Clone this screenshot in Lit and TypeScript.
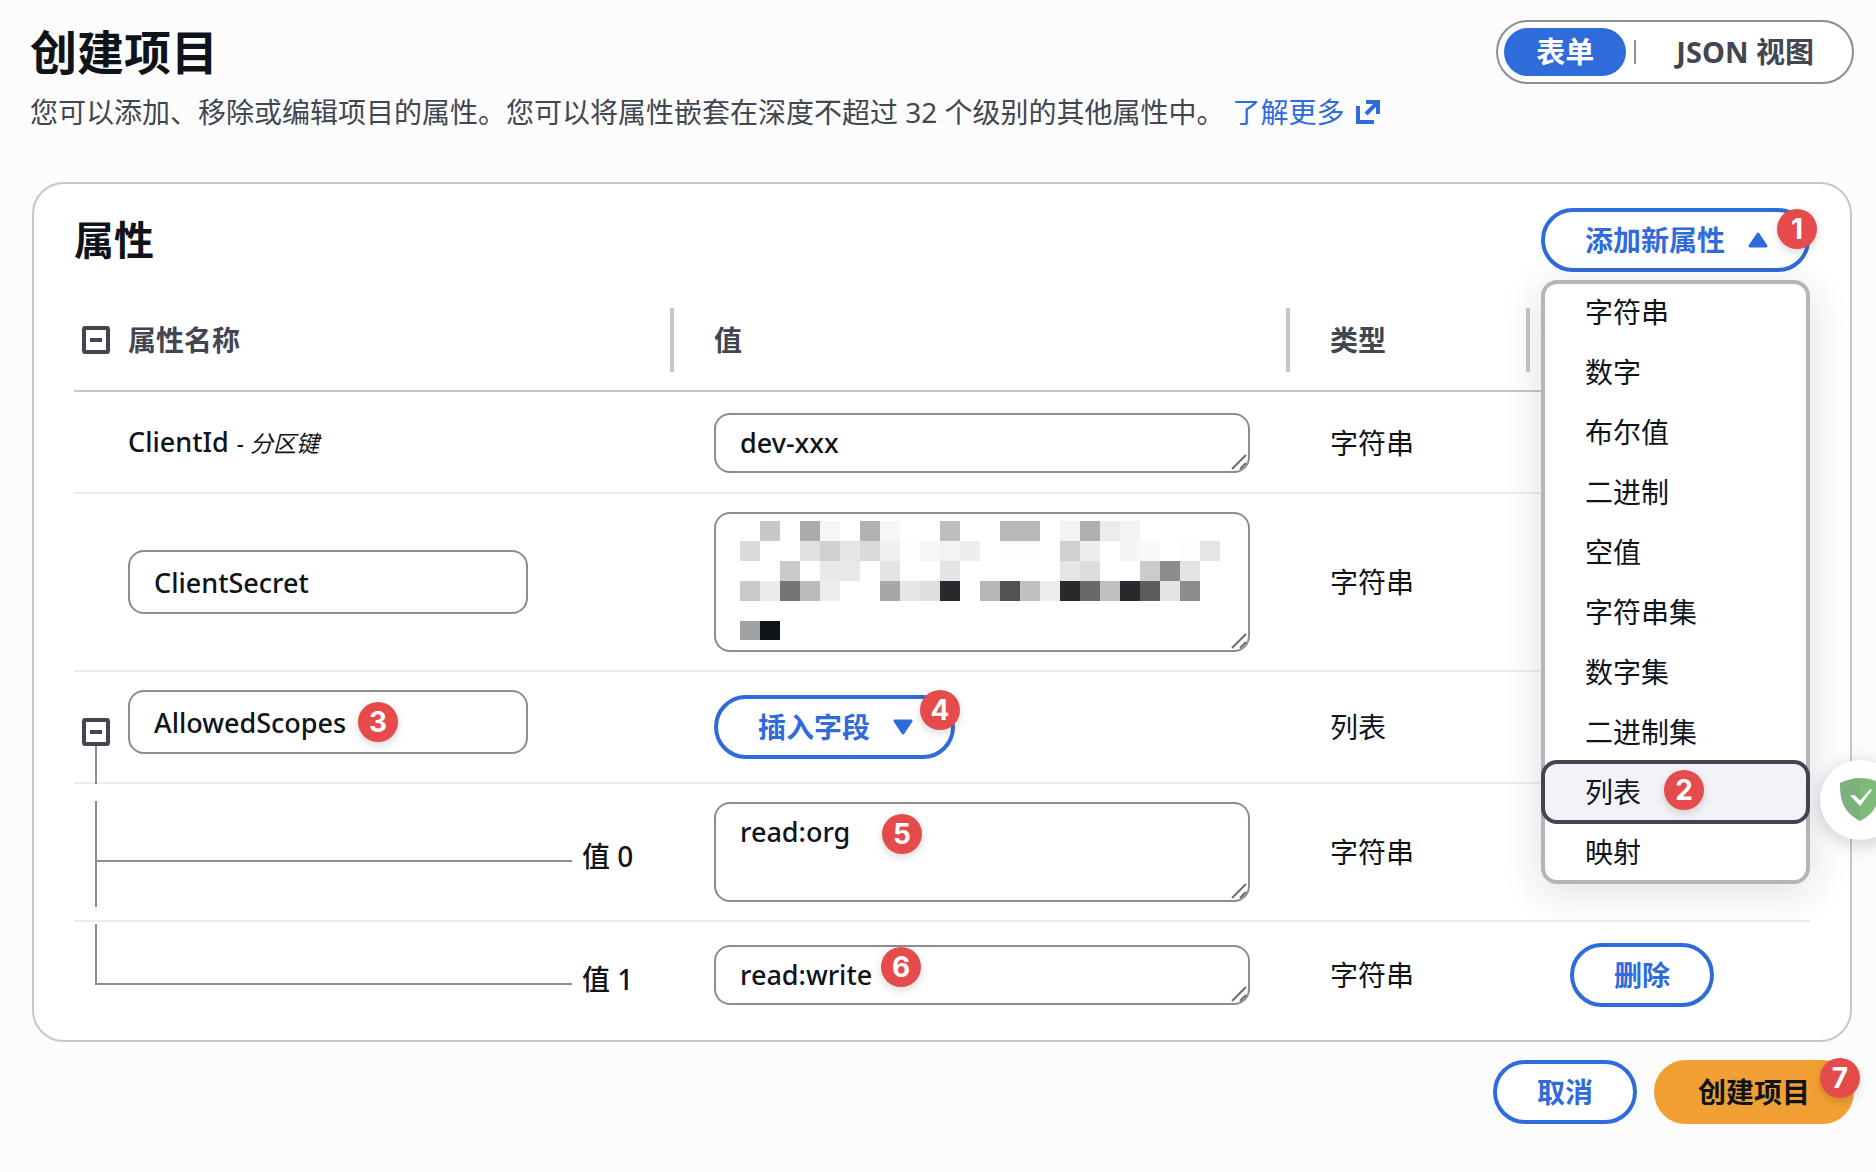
import { LitElement, html, svg, css, nothing } from "lit";
import { customElement } from "lit/decorators.js";

const TYPES = ["字符串", "数字", "布尔值", "二进制", "空值", "字符串集", "数字集", "二进制集", "列表", "映射"];

/* Mosaic over the secret value: [column, shade] pairs for each 20px line. */
const MOSAIC: Array<Array<[number, string]>> = [
  [[1, "#c6c7c9"], [3, "#ababac"], [4, "#f6f6f6"], [6, "#b1b2b4"], [7, "#f6f6f6"], [10, "#bdbec0"], [13, "#b7b8ba"], [14, "#b8b8b8"], [16, "#f4f4f4"], [17, "#b0b0b0"], [18, "#ececec"], [19, "#f4f4f4"]],
  [[0, "#d9dadc"], [3, "#e0e0e2"], [4, "#d0d0d0"], [5, "#e5e5e5"], [6, "#d9dbda"], [7, "#f0f0f0"], [8, "#fdfdfd"], [9, "#f7f7f7"], [10, "#f3f3f3"], [11, "#eeeeee"], [13, "#fdfdfd"], [14, "#fdfdfd"], [16, "#d0d0d0"], [17, "#ededed"], [19, "#f5f5f5"], [20, "#fafafa"], [22, "#fdfdfd"], [23, "#e5e5e5"]],
  [[2, "#cacaca"], [4, "#e9e9e9"], [5, "#e9e9e9"], [7, "#e3e3e3"], [10, "#e4e4e4"], [16, "#e5e7e6"], [17, "#dcdedd"], [20, "#cbcbcb"], [21, "#8b8c8e"], [22, "#e1e4e3"]],
  [[0, "#c9c9c9"], [1, "#ebebeb"], [2, "#747577"], [3, "#bbbcbe"], [4, "#ececec"], [7, "#a6a7a9"], [8, "#e7e7e7"], [9, "#dedede"], [10, "#28292d"], [12, "#b7b7b7"], [13, "#525355"], [14, "#c0c1c3"], [15, "#ececec"], [16, "#28292d"], [17, "#68696b"], [18, "#bfc1c0"], [19, "#28292d"], [20, "#5c5d5f"], [21, "#e4e4e4"], [22, "#8b8c8e"]],
  [],
  [[0, "#a0a1a3"], [1, "#0f141a"]],
];

@customElement("app-root")
export class AppRoot extends LitElement {
  static styles = css`
    :host {
      display: block;
      position: relative;
      min-height: 100vh;
      overflow: hidden;
      box-sizing: border-box;
      padding: 20px 22px 48px 30px;
      background: #fcfcfc;
      color: #0f141a;
      font-family: "Noto Sans", "Noto Sans CJK SC", sans-serif;
      font-size: 28px;
      line-height: 40px;
    }
    *, *::before, *::after { box-sizing: border-box; }
    h1, h2, p, ul { margin: 0; padding: 0; }
    button, input, textarea { font: inherit; color: inherit; margin: 0; }
    svg { display: block; flex: none; }

    .page-head { display: flex; justify-content: space-between; align-items: flex-start; }
    .title { font-size: 47px; line-height: 64px; font-weight: 700; }
    .intro { display: flex; align-items: center; margin-top: 8px; color: #424650; }
    .more { display: flex; align-items: center; gap: 11px; margin-left: 8px; color: #2f6bda; text-decoration: none; }

    .toggle { display: flex; align-items: center; gap: 8px; height: 64px; padding: 6px; border: 2px solid #8c8c94; border-radius: 32px; background: #fff; }
    .seg { height: 48px; padding: 0 32px; border: 0; border-radius: 24px; background: none; color: #424650; font-size: 29px; font-weight: 700; white-space: nowrap; line-height: 40px; }
    .seg.on { background: #2f6bda; color: #fff; }
    .toggle-rule { width: 2px; height: 24px; background: #8c8c94; }

    .card { margin: 50px 2px 0; padding: 24px 40px 12px; border: 2px solid #c6c6cd; border-radius: 32px; background: #fff; }
    .card-head { display: flex; justify-content: space-between; align-items: center; margin-bottom: 18px; }
    .card-title { font-size: 40px; line-height: 56px; font-weight: 700; }

    .btn { display: flex; align-items: center; justify-content: center; height: 64px; padding: 0 40px; border: 4px solid #2f6bda; border-radius: 32px; background: #fff; color: #2f6bda; font-weight: 700; white-space: nowrap; }
    .btn.drop { gap: 23px; padding-right: 38px; }
    .btn.primary { border-color: #f09f33; background: #f09f33; color: #0f141a; }

    .anchor { position: relative; }
    .badge { position: absolute; z-index: 3; display: flex; align-items: center; justify-content: center; width: 40px; height: 40px; border-radius: 50%; background: #e54b4b; color: #fff; font-family: Inter, sans-serif; font-weight: 700; font-size: 28px; line-height: 40px; box-shadow: 0 3px 8px rgba(0, 0, 0, 0.16); }
    .b1 { right: -7px; top: 1px; }
    .b2 { left: 123px; top: 10px; }
    .b3 { left: 230px; top: 12px; }
    .b4 { right: -5px; top: -5px; }
    .b5 { left: 168px; top: 12px; }
    .b6 { left: 167px; top: 2px; }
    .b7 { right: -6px; top: -2px; }

    .menu { position: absolute; z-index: 2; top: 72px; left: 0; right: 0; list-style: none; border: 4px solid #b4b4bb; border-radius: 16px; background: #fff; box-shadow: 0 8px 40px 2px rgba(0, 7, 22, 0.12); }
    .menu-item { position: relative; margin: 0 -4px -4px; }
    .menu-item:first-child { margin-top: -4px; }
    .option { display: block; width: 100%; height: 64px; padding: 0 40px; border: 4px solid transparent; border-radius: 16px; background: none; text-align: left; line-height: 40px; }
    .option.on { border-color: #424650; background: #f3f3f7; }

    .grid { display: block; }
    .row { display: grid; grid-template-columns: 600fr 616fr 240fr 280fr; border-bottom: 2px solid #ebebf0; }
    .row:last-child { border-bottom: 0; }
    .row.head { border-bottom: 2px solid #c6c6cd; color: #424650; }
    th, td { display: flex; align-items: center; padding: 18px 40px; font-weight: 400; text-align: left; }
    th { position: relative; font-weight: 700; }
    .rule { position: absolute; top: 18px; right: 0; width: 4px; height: 64px; background: #c6c6cd; }
    .head th { height: 100px; }
    .key td { padding-block: 21px 19px; }
    .list td { padding-block: 23px; }
    .last td { padding-block: 21px; }

    th.name, td.name { padding: 0; align-items: stretch; }
    .rail { display: flex; flex-direction: column; align-items: center; flex: none; width: 44px; margin-right: 10px; }
    .toggle-all { padding: 0; border: 0; background: none; }
    .name-body { display: flex; align-items: center; flex: 1; }
    .head .rail { justify-content: center; }
    .list .rail { padding-top: 46px; margin-bottom: -2px; }
    .list .name-body { padding-bottom: 10px; }
    .rail-line { flex: 1; width: 2px; background: #8c8c94; }
    .branch { display: flex; align-items: center; flex: 1; padding-left: 21px; }
    .stem { flex: none; width: 2px; background: #8c8c94; }
    .stem.mid { height: 106px; }
    .mid-branch { padding-top: 4px; }
    .end-branch { align-items: flex-start; padding-top: 2px; }
    .stem.end { height: 61px; }
    .arm { flex: 1; height: 2px; background: #8c8c94; }
    .mid-branch .arm { margin-top: 14px; }
    .end-branch .arm { margin-top: 59px; }
    .leaf { flex: none; width: 92px; margin-left: 10px; white-space: pre; font-weight: 500; }
    .mid-branch .leaf { margin-top: 4px; }
    .end-branch .leaf { margin-top: 35px; }

    .latin { font-size: 27px; font-weight: 500; }
    .key-note { margin-left: 8px; font-size: 23px; }
    .box { position: relative; width: 400px; height: 64px; }
    .input { width: 100%; height: 100%; padding: 0 24px; border: 2px solid #8c8c94; border-radius: 16px; background: #fff; font-size: 27px; font-weight: 500; outline: 0; }
    .area-wrap { position: relative; flex: 1; }
    .area { display: block; width: 100%; padding: 8px 24px; border: 2px solid #8c8c94; border-radius: 16px; background: #fff; font-size: 27px; font-weight: 500; line-height: 40px; resize: none; overflow: hidden; outline: 0; }
    .h60 { height: 60px; }
    .h100 { height: 100px; }
    .h140 { height: 140px; }
    .grip { position: absolute; right: 2px; bottom: 2px; }
    .mosaic { position: absolute; left: 26px; top: 9px; }

    .footer { display: flex; justify-content: flex-end; gap: 17px; margin-top: 18px; }
    .shield { position: absolute; z-index: 4; top: 760px; right: -24px; display: flex; align-items: center; justify-content: center; width: 80px; height: 80px; padding: 0; border: 0; border-radius: 50%; background: #fff; box-shadow: 0 4px 20px rgba(0, 0, 0, 0.2); }
  `;

  private minus() {
    return html`<button class="toggle-all" aria-label="折叠">
      <svg width="28" height="28" viewBox="0 0 28 28">
        <rect x="2" y="2" width="24" height="24" rx="1" fill="#fff" stroke="#424650" stroke-width="4" />
        <path d="M8 14h12" stroke="#424650" stroke-width="4" />
      </svg>
    </button>`;
  }

  private caret(up: boolean) {
    return html`<svg width="20" height="16" viewBox="0 0 20 16">
      <path d=${up ? "M10 2 18 14H2Z" : "M10 14 18 2H2Z"} fill="#2f6bda" stroke="#2f6bda" stroke-width="3" stroke-linejoin="round" />
    </svg>`;
  }

  private area(label: string, value: string, size: string, extra: unknown = nothing) {
    return html`<div class="area-wrap">
      <textarea class="area ${size}" aria-label=${label} spellcheck="false" .value=${value}></textarea>
      ${extra}
      <svg class="grip" width="17" height="17" viewBox="0 0 17 17" fill="none" stroke="#6e6e72" stroke-width="2">
        <path d="M1 15 15 1M9 15 15 9" />
      </svg>
    </div>`;
  }

  private mosaic() {
    return html`<svg class="mosaic" width="480" height="119" viewBox="0 0 480 119" shape-rendering="crispEdges">
      ${MOSAIC.map((line, y) =>
        line.map(([x, shade]) => svg`<rect x=${x * 20} y=${y * 20} width="20" height="20" fill=${shade} />`)
      )}
    </svg>`;
  }

  render() {
    return html`
      <header class="page-head">
        <div>
          <h1 class="title">创建项目</h1>
          <p class="intro">
            <span>您可以添加、移除或编辑项目的属性。您可以将属性嵌套在深度不超过 32 个级别的其他属性中。</span>
            <a class="more" href="#">了解更多
              <svg width="24" height="24" viewBox="0 0 24 24" fill="none" stroke="#2f6bda" stroke-width="4">
                <path d="M2 6v16h16M10 2h12v12M22 2 10 14" />
              </svg>
            </a>
          </p>
        </div>
        <div class="toggle">
          <button class="seg on" aria-pressed="true">表单</button>
          <span class="toggle-rule"></span>
          <button class="seg" aria-pressed="false">JSON 视图</button>
        </div>
      </header>

      <section class="card">
        <div class="card-head">
          <h2 class="card-title">属性</h2>
          <div class="anchor">
            <button class="btn drop" aria-expanded="true">添加新属性 ${this.caret(true)}</button>
            <span class="badge b1">1</span>
            <ul class="menu">
              ${TYPES.map((t) => html`<li class="menu-item">
                <button class="option ${t === "列表" ? "on" : ""}">${t}</button>
                ${t === "列表" ? html`<span class="badge b2">2</span>` : nothing}
              </li>`)}
            </ul>
          </div>
        </div>

        <table class="grid">
          <thead class="grid">
            <tr class="row head">
              <th class="name"><div class="rail">${this.minus()}</div><div class="name-body">属性名称</div><span class="rule"></span></th>
              <th>值<span class="rule"></span></th>
              <th>类型<span class="rule"></span></th>
              <th></th>
            </tr>
          </thead>
          <tbody class="grid">
            <tr class="row key">
              <td class="name"><div class="rail"></div><div class="name-body"><span><span class="latin">ClientId</span><em class="key-note">- 分区键</em></span></div></td>
              <td>${this.area("ClientId 值", "dev-xxx", "h60")}</td>
              <td>字符串</td>
              <td></td>
            </tr>
            <tr class="row">
              <td class="name"><div class="rail"></div><div class="name-body"><div class="box"><input class="input" aria-label="属性名称" value="ClientSecret" /></div></div></td>
              <td>${this.area("ClientSecret 值", "", "h140", this.mosaic())}</td>
              <td>字符串</td>
              <td></td>
            </tr>
            <tr class="row list">
              <td class="name">
                <div class="rail">${this.minus()}<div class="rail-line"></div></div>
                <div class="name-body"><div class="box"><input class="input" aria-label="属性名称" value="AllowedScopes" /><span class="badge b3">3</span></div></div>
              </td>
              <td><div class="anchor"><button class="btn drop">插入字段 ${this.caret(false)}</button><span class="badge b4">4</span></div></td>
              <td>列表</td>
              <td></td>
            </tr>
            <tr class="row">
              <td class="name"><div class="branch mid-branch"><div class="stem mid"></div><div class="arm"></div><span class="leaf">值 0</span></div></td>
              <td>${this.area("值 0", "read:org", "h100", html`<span class="badge b5">5</span>`)}</td>
              <td>字符串</td>
              <td></td>
            </tr>
            <tr class="row last">
              <td class="name"><div class="branch end-branch"><div class="stem end"></div><div class="arm"></div><span class="leaf">值 1</span></div></td>
              <td>${this.area("值 1", "read:write", "h60", html`<span class="badge b6">6</span>`)}</td>
              <td>字符串</td>
              <td><button class="btn">删除</button></td>
            </tr>
          </tbody>
        </table>
      </section>

      <footer class="footer">
        <button class="btn">取消</button>
        <div class="anchor"><button class="btn primary">创建项目</button><span class="badge b7">7</span></div>
      </footer>

      <button class="shield" aria-label="安全防护">
        <svg width="40" height="44" viewBox="0 0 40 44">
          <path d="M20 0C13 0 6 2 0 5c0 14 1 28 20 38Z" fill="#7bb07f" />
          <path d="M20 0c7 0 14 2 20 5 0 14-1 28-20 38Z" fill="#7fbb78" />
          <path d="M10 17.500 14.500 17 20 22.500 30.500 11 32 12 20 28Z" fill="#fff" />
        </svg>
      </button>
    `;
  }
}
